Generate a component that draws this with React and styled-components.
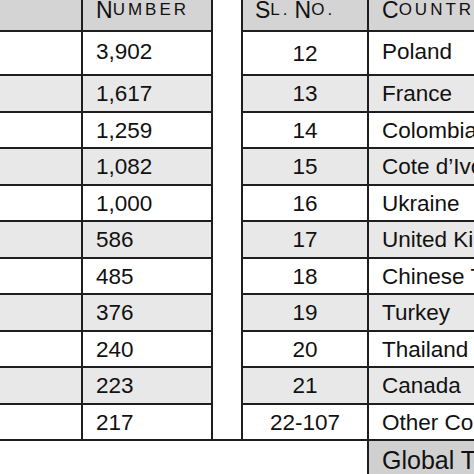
import React from "react";
import styled, { createGlobalStyle, css } from "styled-components";

const Global = createGlobalStyle`
  html, body { margin: 0; padding: 0; background: #fff; overflow: hidden; }
  body { font-family: "Liberation Sans", Arial, Helvetica, sans-serif; color: #111; }
`;

const LINE = "2px solid #1e1e1e";

const Page = styled.div`
  width: 474px;
  height: 474px;
  overflow: hidden;
`;

const Table = styled.div`
  width: 620px;
  display: flex;
  flex-direction: column;
`;

const Row = styled.div`
  display: grid;
  grid-template-columns: 83px 130px 28px 128px 251px;
  height: ${(p) => p.$h}px;
`;

const Cell = styled.div`
  box-sizing: border-box;
  display: flex;
  align-items: center;
  white-space: nowrap;
  font-size: 22.5px;
  padding-top: 2px;
  background: ${(p) => (p.$shade ? "#e8e8e8" : "#ffffff")};
  border-bottom: ${LINE};
`;

const NameCell = styled(Cell)`
  border-right: ${LINE};
`;

const NumCell = styled(Cell)`
  border-right: ${LINE};
  padding-left: 13px;
  ${(p) => p.$lift && css`padding-bottom: 5px;`}
`;

const Gap = styled.div`
  box-sizing: border-box;
  background: #fff;
  border-bottom: ${(p) => (p.$closing ? LINE : "none")};
`;

const SlCell = styled(Cell)`
  border-left: ${LINE};
  border-right: ${LINE};
  justify-content: center;
`;

const CountryCell = styled(Cell)`
  padding-left: 13px;
  ${(p) => p.$lift && css`padding-bottom: 5px;`}
`;

const HeadCell = styled.div`
  box-sizing: border-box;
  display: flex;
  align-items: flex-start;
  white-space: nowrap;
  background: #d4d4d4;
  border-bottom: ${LINE};
  font-size: 23px;
  line-height: 20px;
  padding-left: ${(p) => p.$pad || 0}px;
  border-left: ${(p) => (p.$left ? LINE : "none")};
  border-right: ${(p) => (p.$right ? LINE : "none")};
`;

const Cap = styled.span`
  font-size: 23px;
`;

const Small = styled.span`
  font-size: 17px;
  letter-spacing: 3px;
  text-transform: uppercase;
`;

const Space = styled.span`
  display: inline-block;
  width: ${(p) => p.$w}px;
`;

const Blank = styled.div`
  background: #fff;
  border-right: ${(p) => (p.$edge ? LINE : "none")};
  box-sizing: border-box;
`;

const TotalCell = styled.div`
  box-sizing: border-box;
  display: flex;
  align-items: center;
  white-space: nowrap;
  font-size: 25px;
  padding-top: 2px;
  background: #d0d0d0;
  padding-left: 13px;
`;

const left = ["3,902", "1,617", "1,259", "1,082", "1,000", "586", "485", "376", "240", "223", "217"];
const right = [
  ["12", "Poland"],
  ["13", "France"],
  ["14", "Colombia"],
  ["15", "Cote d\u2019Ivoire"],
  ["16", "Ukraine"],
  ["17", "United Kingdom"],
  ["18", "Chinese Taipei"],
  ["19", "Turkey"],
  ["20", "Thailand"],
  ["21", "Canada"],
  ["22-107", "Other Countries"],
];

export default function App() {
  return (
    <Page>
      <Global />
      <Table>
        <Row $h={32}>
          <HeadCell $right />
          <HeadCell $right $pad={13}>
            <Cap>N</Cap>
            <Small>umber</Small>
          </HeadCell>
          <Gap />
          <HeadCell $left $right $pad={12}>
            <Cap>S</Cap>
            <Small>l.</Small>
            <Space $w={4} />
            <Cap>N</Cap>
            <Small>o.</Small>
          </HeadCell>
          <HeadCell $pad={13}>
            <Cap>C</Cap>
            <Small>ountry</Small>
          </HeadCell>
        </Row>
        {left.map((n, i) => {
          const shade = i % 2 === 1;
          const lift = i === 0;
          const last = i === left.length - 1;
          return (
            <Row key={n} $h={i === 0 ? 44 : 36.5}>
              <NameCell $shade={shade} />
              <NumCell $shade={shade} $lift={lift}>{n}</NumCell>
              <Gap $closing={last} />
              <SlCell $shade={shade}>{right[i][0]}</SlCell>
              <CountryCell $shade={shade} $lift={lift}>{right[i][1]}</CountryCell>
            </Row>
          );
        })}
        <Row $h={36.5}>
          <Blank />
          <Blank />
          <Blank />
          <Blank $edge />
          <TotalCell>Global Total</TotalCell>
        </Row>
      </Table>
    </Page>
  );
}
